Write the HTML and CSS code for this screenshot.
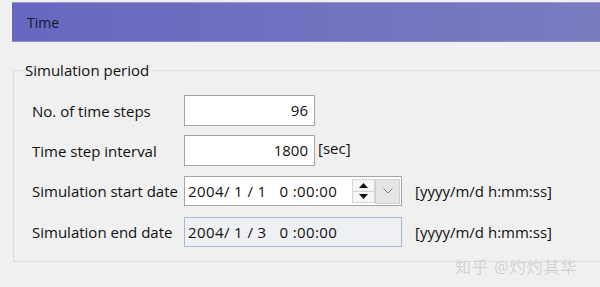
FILE: index.html
```html
<!DOCTYPE html>
<html>
<head>
<meta charset="utf-8">
<link rel="stylesheet" href="styles.css">
</head>
<body>
<div class="header">Time</div>
<fieldset class="group">
  <legend class="legend">Simulation period</legend>
  <div class="rows">
    <div class="row r1">
      <span class="label">No. of time steps</span>
      <div class="box num">96</div>
    </div>
    <div class="row r2">
      <span class="label">Time step interval</span>
      <div class="box num">1800</div>
      <span class="unit">[sec]</span>
    </div>
    <div class="row r3">
      <span class="label">Simulation start date</span>
      <div class="box date">
        <span class="dtext">2004/ 1 / 1   0 :00:00</span>
        <div class="spin">
          <div class="spin-btn"><svg width="9" height="5" viewBox="0 0 9 5"><path d="M0 5 L4.5 0 L9 5 Z" fill="#111"/></svg></div>
          <div class="spin-btn"><svg width="9" height="5" viewBox="0 0 9 5"><path d="M0 0 L4.5 5 L9 0 Z" fill="#111"/></svg></div>
        </div>
        <div class="drop"><svg width="10" height="6" viewBox="0 0 10 6"><path d="M0.5 0.5 L5 5 L9.5 0.5" fill="none" stroke="#777" stroke-width="1"/></svg></div>
      </div>
      <span class="fmt">[yyyy/m/d h:mm:ss]</span>
    </div>
    <div class="row r4">
      <span class="label">Simulation end date</span>
      <div class="box date ro"><span class="dtext">2004/ 1 / 3   0 :00:00</span></div>
      <span class="fmt">[yyyy/m/d h:mm:ss]</span>
    </div>
  </div>
</fieldset>
<div class="mark">知乎 @灼灼其华</div>
</body>
</html>
```

FILE: styles.css
```css
html, body {
  margin: 0;
  padding: 0;
  width: 600px;
  height: 287px;
  overflow: hidden;
  background: #f0f0f0;
  font-family: "Open Sans", "Noto Sans CJK SC", sans-serif;
  color: #111;
}
.header {
  margin: 2px 0 0 12px;
  height: 40px;
  box-sizing: border-box;
  padding-left: 15px;
  line-height: 40px;
  font-size: 14px;
  color: #151530;
  background: linear-gradient(to right, #6767c0, #7373c0 60%, #7b7bc0);
  border-top: 1px solid #9a9ad0;
  border-bottom: 1px solid #8c8cc4;
}
.group {
  margin: 20px 0 0 13px;
  padding: 16px 0 14px 18px;
  border: 1px solid #dcdcdc;
  border-right: none;
  min-width: 0;
}
.legend {
  margin-left: -9px;
  padding: 0 3px 0 2px;
  font-size: 15px;
  line-height: 17px;
}
.rows {
  display: grid;
  grid-template-rows: 40px 41px 41px 30px;
}
.row {
  display: flex;
  align-items: flex-start;
  font-size: 15px;
}
.label {
  width: 152px;
  flex: none;
  line-height: 32px;
}
.r3 .label, .r4 .label { line-height: 31px; }
.box {
  box-sizing: border-box;
  background: #fff;
  border: 1px solid #a5a5a5;
  height: 31px;
}
.num {
  width: 131px;
  text-align: right;
  padding-right: 6px;
  line-height: 29px;
}
.unit {
  margin-left: 3px;
  line-height: 27px;
}
.date {
  width: 218px;
  height: 30px;
  display: flex;
  align-items: center;
  padding-left: 3px;
}
.dtext {
  white-space: pre;
  flex: 1;
  letter-spacing: 0.4px;
}
.ro {
  background: #eef0f3;
  border-color: #a9b9cf;
}
.spin {
  display: flex;
  flex-direction: column;
  width: 23px;
  height: 24px;
  box-sizing: border-box;
}
.spin-btn {
  flex: 1;
  display: flex;
  align-items: center;
  justify-content: center;
  border: 1px solid #d6d6d6;
  background: #f6f6f6;
}
.spin-btn + .spin-btn { border-top: none; }
.drop {
  width: 25px;
  height: 25px;
  margin-right: 1px;
  box-sizing: border-box;
  background: #e5e5e5;
  border: 1px solid #cfcfcf;
  display: flex;
  align-items: center;
  justify-content: center;
}
.fmt {
  margin-left: 13px;
  line-height: 30px;
}
.mark {
  position: absolute;
  left: 455px;
  top: 254px;
  font-size: 16px;
  color: #cfcfcf;
  text-shadow: 0 0 1px #fff;
  letter-spacing: 1px;
}
```
